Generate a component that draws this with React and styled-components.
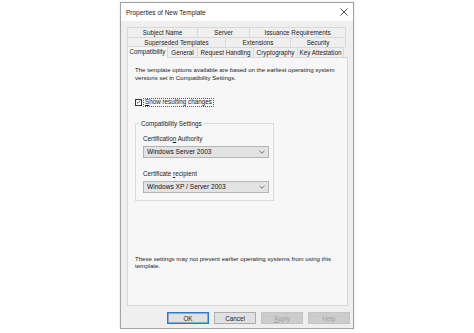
import React from 'react'
import styled, { createGlobalStyle } from 'styled-components'

const Global = createGlobalStyle`
  html, body {
    margin: 0;
    background: #ffffff;
  }
  body {
    font-family: "Liberation Sans", Arial, sans-serif;
    font-size: 6.3px;
    color: #1b1b1b;
  }
`

const tabRows = [
  [
    { label: 'Subject Name', width: 71 },
    { label: 'Server', width: 53 },
    { label: 'Issuance Requirements', width: 97 },
  ],
  [
    { label: 'Superseded Templates', width: 99 },
    { label: 'Extensions', width: 66 },
    { label: 'Security', width: 56 },
  ],
  [
    { label: 'Compatibility', width: 41, active: true },
    { label: 'General', width: 31 },
    { label: 'Request Handling', width: 57 },
    { label: 'Cryptography', width: 45 },
    { label: 'Key Attestation', width: 47 },
  ],
]

const Chevron = () => (
  <svg width="6" height="4" viewBox="0 0 6 4">
    <path d="M0.5 0.8 L3 3.2 L5.5 0.8" fill="none" stroke="#555" strokeWidth="0.8" />
  </svg>
)

const Combo = ({ value }) => (
  <ComboBox>
    <span>{value}</span>
    <Chevron />
  </ComboBox>
)

export default function App() {
  return (
    <>
      <Global />
      <Window>
        <TitleBar>
          <Title>Properties of New Template</Title>
          <svg width="8" height="8" viewBox="0 0 8 8">
            <path d="M0.5 0.5 L7.5 7.5 M7.5 0.5 L0.5 7.5" stroke="#222" strokeWidth="0.8" />
          </svg>
        </TitleBar>
        <Body>
          <Tabs>
            {tabRows.map((row, i) => (
              <TabRow key={i} $last={i === tabRows.length - 1}>
                {row.map((t) => (
                  <Tab key={t.label} $width={t.width} $active={t.active}>
                    {t.label}
                  </Tab>
                ))}
              </TabRow>
            ))}
          </Tabs>
          <Panel>
            <Paragraph>
              The template options available are based on the earliest operating system
              versions set in Compatibility Settings.
            </Paragraph>
            <CheckRow>
              <CheckBox>
                <svg width="6" height="6" viewBox="0 0 6 6">
                  <path d="M0.8 3 L2.4 4.6 L5.3 1.2" fill="none" stroke="#222" strokeWidth="0.8" />
                </svg>
              </CheckBox>
              <FocusLabel>
                <u>S</u>how resulting changes
              </FocusLabel>
            </CheckRow>
            <Group>
              <Legend>Compatibility Settings</Legend>
              <FieldLabel>
                Certificatio<u>n</u> Authority
              </FieldLabel>
              <Combo value="Windows Server 2003" />
              <FieldLabel $gap={12}>
                Certificate <u>r</u>ecipient
              </FieldLabel>
              <Combo value="Windows XP / Server 2003" />
            </Group>
            <Note>
              These settings may not prevent earlier operating systems from using this
              template.
            </Note>
          </Panel>
          <Buttons>
            <Button $default>OK</Button>
            <Button>Cancel</Button>
            <Button $disabled>
              <u>A</u>pply
            </Button>
            <Button $disabled>Help</Button>
          </Buttons>
        </Body>
      </Window>
    </>
  )
}

const Window = styled.div`
  width: 232px;
  height: 325px;
  margin: 2px auto 0;
  border: 1px solid #a3a3a3;
  box-shadow: 0 0 2px rgba(0, 0, 0, 0.15);
  display: flex;
  flex-direction: column;
  background: #efefef;
`

const TitleBar = styled.div`
  height: 18px;
  background: #ffffff;
  display: flex;
  align-items: center;
  justify-content: space-between;
  padding: 0 5px 0 5px;
  flex-shrink: 0;
`

const Title = styled.div`
  font-size: 6.5px;
  color: #222;
`

const Body = styled.div`
  flex: 1;
  display: flex;
  flex-direction: column;
  padding: 5px 5px 0 6px;
`

const Tabs = styled.div`
  display: flex;
  flex-direction: column;
`

const TabRow = styled.div`
  display: flex;
  height: ${(p) => (p.$last ? 10 : 10.5)}px;
  align-items: flex-end;
`

const Tab = styled.div`
  width: ${(p) => p.$width}px;
  height: ${(p) => (p.$active ? 12 : 10)}px;
  box-sizing: border-box;
  display: flex;
  align-items: center;
  justify-content: center;
  white-space: nowrap;
  border: 1px solid #d9d9d9;
  border-bottom: none;
  margin-right: -1px;
  background: ${(p) => (p.$active ? '#f7f7f7' : '#efefef')};
  color: #222;
  position: relative;
  z-index: ${(p) => (p.$active ? 2 : 1)};
  margin-bottom: ${(p) => (p.$active ? -1 : 0)}px;
  padding-bottom: ${(p) => (p.$active ? 2 : 0)}px;
`

const Panel = styled.div`
  width: 221px;
  height: 249px;
  box-sizing: border-box;
  background: #f7f7f7;
  border: 1px solid #d9d9d9;
  padding: 8px 7px 0 7px;
  display: flex;
  flex-direction: column;
`

const Paragraph = styled.p`
  margin: 0;
  font-size: 6.1px;
  line-height: 7.6px;
  width: 210px;
`

const CheckRow = styled.div`
  display: flex;
  align-items: center;
  gap: 1px;
  margin-top: 17px;
`

const CheckBox = styled.div`
  width: 7px;
  height: 7px;
  box-sizing: border-box;
  border: 1px solid #333;
  background: #fff;
  display: flex;
  align-items: center;
  justify-content: center;
`

const FocusLabel = styled.span`
  border: 1px dotted #555;
  padding: 0 1px;
  line-height: 6.5px;
`

const Group = styled.div`
  margin-top: 16px;
  width: 139px;
  height: 78px;
  box-sizing: border-box;
  border: 1px solid #dcdcdc;
  padding: 11px 5px 0 7px;
  position: relative;
  display: flex;
  flex-direction: column;
`

const Legend = styled.div`
  position: absolute;
  top: -4px;
  left: 4px;
  padding: 0 1px;
  background: #f7f7f7;
`

const FieldLabel = styled.div`
  margin-top: ${(p) => p.$gap || 0}px;
  margin-bottom: 4px;
`

const ComboBox = styled.div`
  width: 126px;
  height: 12px;
  box-sizing: border-box;
  border: 1px solid #b4b4b4;
  background: #e3e3e3;
  display: flex;
  align-items: center;
  justify-content: space-between;
  padding: 0 3px 0 3px;
  font-size: 6.6px;
  color: #111;
`

const Note = styled.p`
  margin: 54px 0 0;
  font-size: 6.1px;
  line-height: 7.6px;
  width: 210px;
`

const Buttons = styled.div`
  display: flex;
  justify-content: flex-end;
  gap: 5px;
  margin-top: 6px;
  margin-right: -2px;
`

const Button = styled.div`
  width: 42px;
  height: 12px;
  box-sizing: border-box;
  display: flex;
  align-items: center;
  justify-content: center;
  background: ${(p) => (p.$disabled ? '#cccccc' : '#e1e1e1')};
  color: ${(p) => (p.$disabled ? '#a2a2a2' : '#1b1b1b')};
  border: 1px solid ${(p) => (p.$default ? '#2b79c9' : p.$disabled ? '#c4c4c4' : '#adadad')};
  box-shadow: ${(p) => (p.$default ? 'inset 0 0 0 0.5px #2b79c9' : 'none')};
`
